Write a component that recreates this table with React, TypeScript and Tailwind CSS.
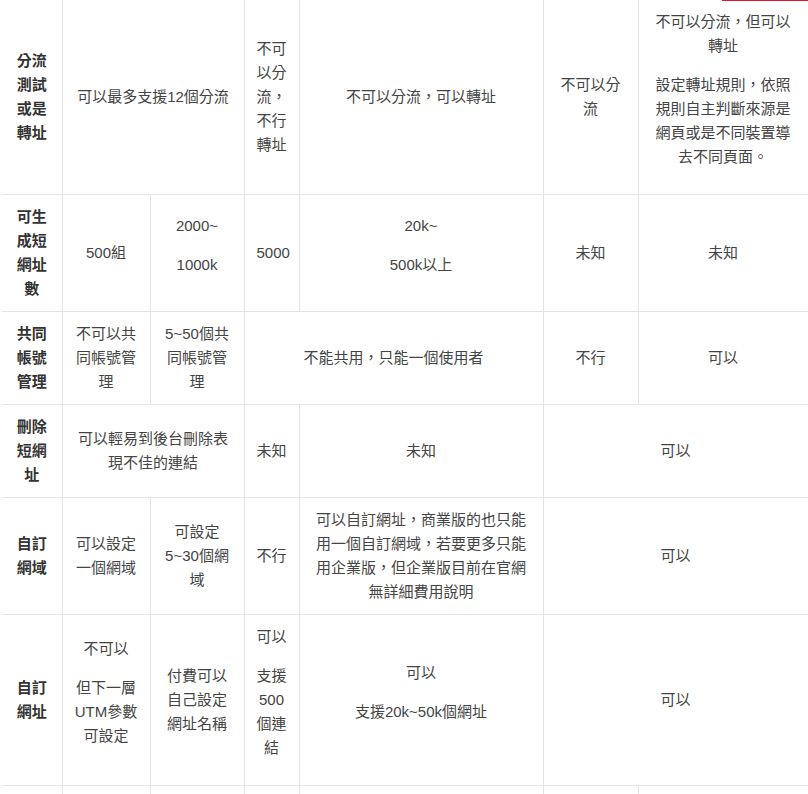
import type { ReactNode } from 'react';

function Th({ children }: { children: ReactNode }) {
  return (
    <td className="border border-[#e4e4e4] border-l-0 px-[12px] py-[10px] text-center align-middle font-bold text-[#333]">
      {children}
    </td>
  );
}

function Td({ children, span }: { children?: ReactNode; span?: number }) {
  return (
    <td
      colSpan={span}
      className="border border-[#e4e4e4] px-[12px] py-[10px] text-center align-middle"
    >
      {children}
    </td>
  );
}

function P({ children }: { children: ReactNode }) {
  return <p className="mb-[15px]">{children}</p>;
}

export default function App() {
  return (
    <div className="relative min-h-screen overflow-hidden bg-white">
      <table
        className="-mt-px ml-[2px] w-[806px] table-fixed border-collapse text-[15px] leading-[24px] text-[#444]"
        style={{ fontFamily: '"Liberation Sans", "Noto Sans CJK TC", sans-serif' }}
      >
        <colgroup>
          <col className="w-[60px]" />
          <col className="w-[88px]" />
          <col className="w-[94px]" />
          <col className="w-[55px]" />
          <col className="w-[244px]" />
          <col className="w-[95px]" />
          <col className="w-[170px]" />
        </colgroup>
        <tbody>
          <tr className="h-[194px]">
            <Th>分流測試或是轉址</Th>
            <Td span={2}>可以最多支援12個分流</Td>
            <Td>不可以分流，不行轉址</Td>
            <Td>不可以分流，可以轉址</Td>
            <Td>不可以分流</Td>
            <Td>
              <P>不可以分流，但可以轉址</P>
              <P>設定轉址規則，依照規則自主判斷來源是網頁或是不同裝置導去不同頁面。</P>
            </Td>
          </tr>
          <tr className="h-[117px]">
            <Th>可生成短網址數</Th>
            <Td>500組</Td>
            <Td>
              <P>2000~</P>
              <P>1000k</P>
            </Td>
            <Td>5000</Td>
            <Td>
              <P>20k~</P>
              <P>500k以上</P>
            </Td>
            <Td>未知</Td>
            <Td>未知</Td>
          </tr>
          <tr className="h-[93px]">
            <Th>共同帳號管理</Th>
            <Td>不可以共同帳號管理</Td>
            <Td>5~50個共同帳號管理</Td>
            <Td span={2}>不能共用，只能一個使用者</Td>
            <Td>不行</Td>
            <Td>可以</Td>
          </tr>
          <tr className="h-[93px]">
            <Th>刪除短網址</Th>
            <Td span={2}>可以輕易到後台刪除表現不佳的連結</Td>
            <Td>未知</Td>
            <Td>未知</Td>
            <Td span={2}>可以</Td>
          </tr>
          <tr className="h-[117px]">
            <Th>自訂網域</Th>
            <Td>可以設定一個網域</Td>
            <Td>可設定5~30個網域</Td>
            <Td>不行</Td>
            <Td>可以自訂網址，商業版的也只能用一個自訂網域，若要更多只能用企業版，但企業版目前在官網無詳細費用說明</Td>
            <Td span={2}>可以</Td>
          </tr>
          <tr className="h-[171px]">
            <Th>自訂網址</Th>
            <Td>
              <P>不可以</P>
              <P>但下一層UTM參數可設定</P>
            </Td>
            <Td>付費可以自己設定網址名稱</Td>
            <Td>
              <P>可以</P>
              <P>支援500個連結</P>
            </Td>
            <Td>
              <P>可以</P>
              <P>支援20k~50k個網址</P>
            </Td>
            <Td span={2}>可以</Td>
          </tr>
          <tr className="h-[60px]">
            <Th>{''}</Th>
            <Td />
            <Td />
            <Td />
            <Td />
            <Td />
            <Td />
          </tr>
        </tbody>
      </table>
      <div className="absolute top-0 right-0 h-px w-[86px] bg-[#e8102c]" />
    </div>
  );
}
